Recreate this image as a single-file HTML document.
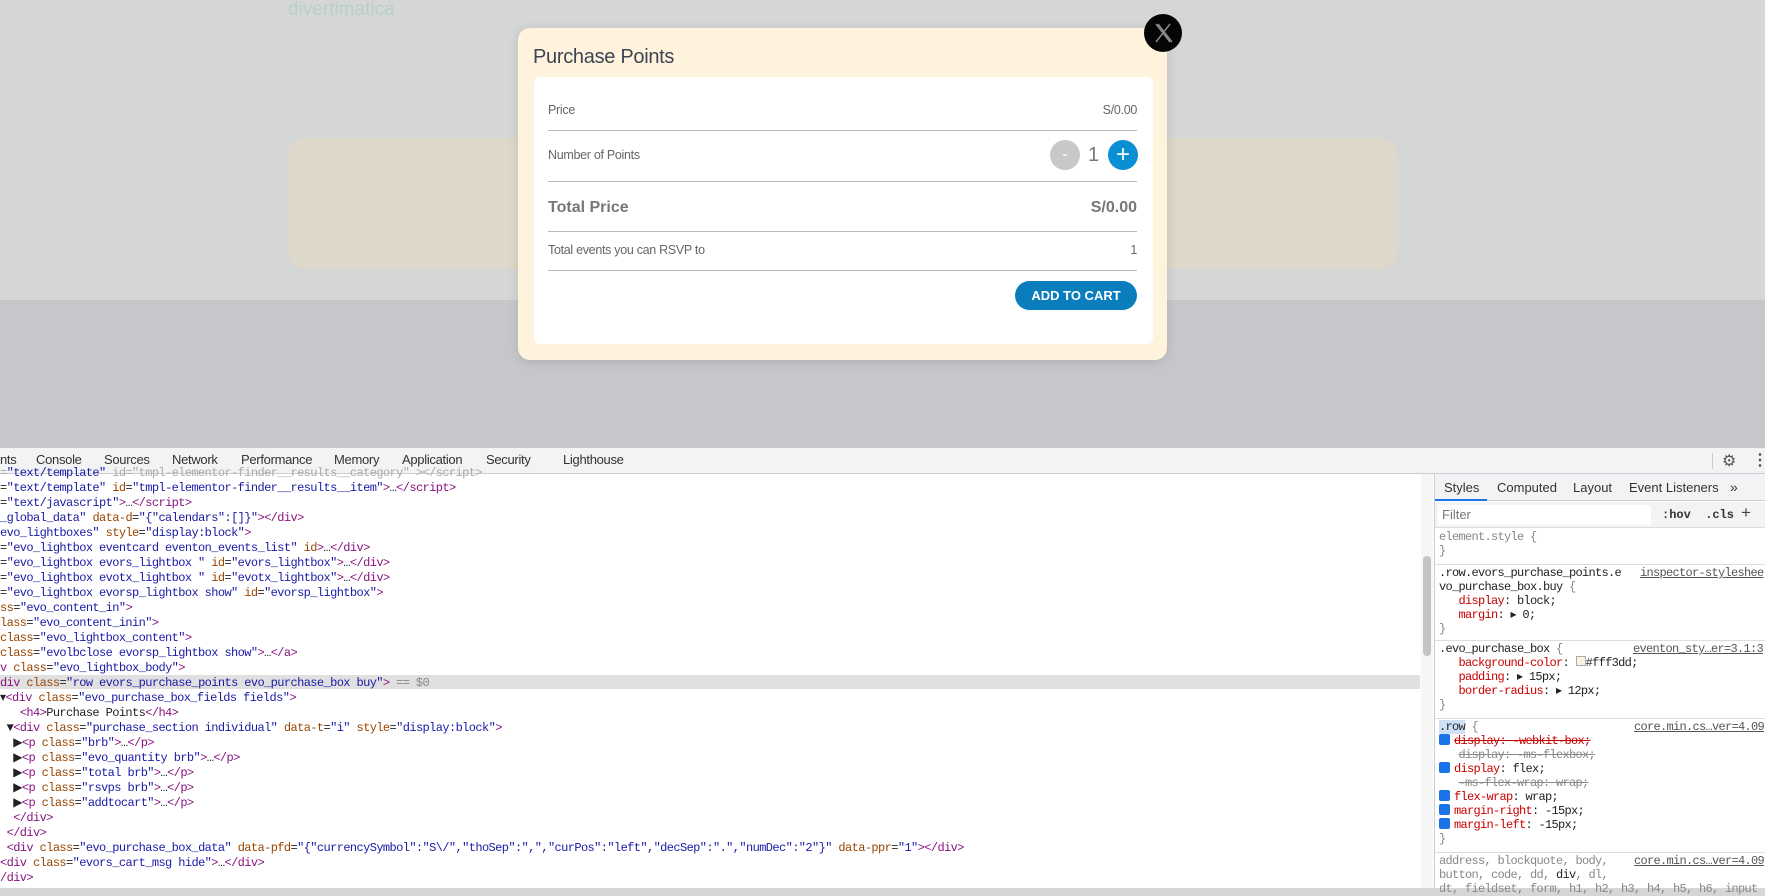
<!DOCTYPE html>
<html><head><meta charset="utf-8">
<style>
*{margin:0;padding:0;box-sizing:border-box}
body{width:1765px;height:888px;overflow:hidden;position:relative;background:#d5d6d6;font-family:"Liberation Sans",sans-serif}
.a{position:absolute;white-space:nowrap}
.modal{left:518px;top:28px;width:649px;height:332px;background:#fff3dd;border-radius:12px;box-shadow:0 2px 10px rgba(0,0,0,.12)}
.inner{left:534px;top:77px;width:619px;height:267px;background:#fff;border-radius:6px}
.lbl{font-size:12.5px;color:#666;letter-spacing:-.3px}
.hr{height:1px;background:#bbb;left:548px;width:589px}
.code{font-family:"Liberation Mono",monospace;font-size:12px;letter-spacing:-.6px;color:#222;line-height:15px;width:1420px;overflow:hidden}
.t{color:#881280}.n{color:#994500}.v{color:#1a1aa6}
.sty{font-family:"Liberation Mono",monospace;font-size:12px;letter-spacing:-.7px;color:#222}
.p{color:#c80000}.g{color:#888}
.tab{top:452px;font-size:13px;color:#333;letter-spacing:-.3px}
.cb{display:inline-block;width:11px;height:11px;background:#1a73e8;border-radius:2px;vertical-align:-1px;margin-right:4px}
</style></head><body>
<div class="a" style="left:0;top:300px;width:1765px;height:148px;background:#c6c7ca"></div>
<div class="a" style="left:288px;top:-1px;font-size:19px;color:#b9cfc7">divertimatica</div>
<div class="a" style="left:288px;top:138px;width:1110px;height:131px;background:#ddd8c9;border-radius:18px"></div>

<div class="a modal"></div>
<div class="a" style="left:533px;top:46px;font-size:20px;color:#3d4552;letter-spacing:-.3px">Purchase Points</div>
<div class="a inner"></div>
<div class="a lbl" style="left:548px;top:103px">Price</div>
<div class="a lbl" style="right:628px;top:103px">S/0.00</div>
<div class="a hr" style="top:130px"></div>
<div class="a lbl" style="left:548px;top:148px">Number of Points</div>
<div class="a" style="left:1050px;top:140px;width:30px;height:30px;border-radius:50%;background:#c8c8c8;color:#fff;font-size:16px;text-align:center;line-height:29px">-</div>
<div class="a" style="left:1088px;top:144px;font-size:20px;color:#777">1</div>
<div class="a" style="left:1108px;top:140px;width:30px;height:30px;border-radius:50%;background:#0a8fd4;color:#fff;font-size:24px;text-align:center;line-height:29px">+</div>
<div class="a hr" style="top:181px"></div>
<div class="a" style="left:548px;top:199px;font-size:16px;font-weight:bold;color:#777">Total Price</div>
<div class="a" style="right:628px;top:199px;font-size:16px;font-weight:bold;color:#777">S/0.00</div>
<div class="a hr" style="top:231px"></div>
<div class="a lbl" style="left:548px;top:243px">Total events you can RSVP to</div>
<div class="a lbl" style="right:628px;top:243px">1</div>
<div class="a hr" style="top:270px"></div>
<div class="a" style="left:1015px;top:281px;width:122px;height:29px;border-radius:15px;background:#0a7dbd;color:#fff;font-size:13px;font-weight:bold;text-align:center;line-height:29px">ADD TO CART</div>
<div class="a" style="left:1144px;top:14px;width:38px;height:38px;border-radius:50%;background:#050505"></div>
<svg class="a" style="left:1144px;top:14px" width="38" height="38"><path d="M12 10L26 28M26 10L12 28M14 10L28 28" stroke="#888" stroke-width="1.5"/></svg>

<!-- devtools -->
<div class="a" style="left:0;top:448px;width:1765px;height:440px;background:#fff"></div>
<div class="a" style="left:0;top:448px;width:1765px;height:26px;background:#f1f3f4;border-bottom:1px solid #cbcdd1"></div>
<div class="a tab" style="left:0">nts</div>
<div class="a tab" style="left:36px">Console</div>
<div class="a tab" style="left:104px">Sources</div>
<div class="a tab" style="left:172px">Network</div>
<div class="a tab" style="left:241px">Performance</div>
<div class="a tab" style="left:334px">Memory</div>
<div class="a tab" style="left:402px">Application</div>
<div class="a tab" style="left:486px">Security</div>
<div class="a tab" style="left:563px">Lighthouse</div>
<div class="a" style="left:1712px;top:453px;width:1px;height:16px;background:#ccc"></div>
<div class="a" style="left:1722px;top:451px;font-size:16px;color:#555">⚙</div>
<div class="a" style="left:1752px;top:450px;font-size:16px;color:#555;font-weight:bold">⋮</div>

<div class="a" style="left:0;top:675px;width:1420px;height:14px;background:#e0e0e0"></div>
<div class="a code" style="left:0;top:466px">
<div style="color:#aaa">=<span class="v">"text/template"</span> id="tmpl-elementor-finder__results__category" &gt;&lt;/script&gt;</div>
<div>=<span class="v">"text/template"</span> <span class="n">id</span>=<span class="v">"tmpl-elementor-finder__results__item"</span><span class="t">&gt;</span>…<span class="t">&lt;/script&gt;</span></div>
<div>=<span class="v">"text/javascript"</span><span class="t">&gt;</span>…<span class="t">&lt;/script&gt;</span></div>
<div><span class="v">_global_data"</span> <span class="n">data-d</span>=<span class="v">"{"calendars":[]}"</span><span class="t">&gt;&lt;/div&gt;</span></div>
<div><span class="v">evo_lightboxes"</span> <span class="n">style</span>=<span class="v">"display:block"</span><span class="t">&gt;</span></div>
<div>=<span class="v">"evo_lightbox eventcard eventon_events_list"</span> <span class="n">id</span><span class="t">&gt;</span>…<span class="t">&lt;/div&gt;</span></div>
<div>=<span class="v">"evo_lightbox evors_lightbox "</span> <span class="n">id</span>=<span class="v">"evors_lightbox"</span><span class="t">&gt;</span>…<span class="t">&lt;/div&gt;</span></div>
<div>=<span class="v">"evo_lightbox evotx_lightbox "</span> <span class="n">id</span>=<span class="v">"evotx_lightbox"</span><span class="t">&gt;</span>…<span class="t">&lt;/div&gt;</span></div>
<div>=<span class="v">"evo_lightbox evorsp_lightbox show"</span> <span class="n">id</span>=<span class="v">"evorsp_lightbox"</span><span class="t">&gt;</span></div>
<div><span class="n">ss</span>=<span class="v">"evo_content_in"</span><span class="t">&gt;</span></div>
<div><span class="n">lass</span>=<span class="v">"evo_content_inin"</span><span class="t">&gt;</span></div>
<div> <span class="n">class</span>=<span class="v">"evo_lightbox_content"</span><span class="t">&gt;</span></div>
<div> <span class="n">class</span>=<span class="v">"evolbclose evorsp_lightbox show"</span><span class="t">&gt;</span>…<span class="t">&lt;/a&gt;</span></div>
<div><span class="t">v</span> <span class="n">class</span>=<span class="v">"evo_lightbox_body"</span><span class="t">&gt;</span></div>
<div><span class="t">div</span> <span class="n">class</span>=<span class="v">"row evors_purchase_points evo_purchase_box buy"</span><span class="t">&gt;</span> <span class="g">== $0</span></div>
<div>▾<span class="t">&lt;div</span> <span class="n">class</span>=<span class="v">"evo_purchase_box_fields fields"</span><span class="t">&gt;</span></div>
<div>&nbsp;&nbsp;&nbsp;<span class="t">&lt;h4&gt;</span>Purchase Points<span class="t">&lt;/h4&gt;</span></div>
<div>&nbsp;▼<span class="t">&lt;div</span> <span class="n">class</span>=<span class="v">"purchase_section individual"</span> <span class="n">data-t</span>=<span class="v">"i"</span> <span class="n">style</span>=<span class="v">"display:block"</span><span class="t">&gt;</span></div>
<div>&nbsp;&nbsp;▶<span class="t">&lt;p</span> <span class="n">class</span>=<span class="v">"brb"</span><span class="t">&gt;</span>…<span class="t">&lt;/p&gt;</span></div>
<div>&nbsp;&nbsp;▶<span class="t">&lt;p</span> <span class="n">class</span>=<span class="v">"evo_quantity brb"</span><span class="t">&gt;</span>…<span class="t">&lt;/p&gt;</span></div>
<div>&nbsp;&nbsp;▶<span class="t">&lt;p</span> <span class="n">class</span>=<span class="v">"total brb"</span><span class="t">&gt;</span>…<span class="t">&lt;/p&gt;</span></div>
<div>&nbsp;&nbsp;▶<span class="t">&lt;p</span> <span class="n">class</span>=<span class="v">"rsvps brb"</span><span class="t">&gt;</span>…<span class="t">&lt;/p&gt;</span></div>
<div>&nbsp;&nbsp;▶<span class="t">&lt;p</span> <span class="n">class</span>=<span class="v">"addtocart"</span><span class="t">&gt;</span>…<span class="t">&lt;/p&gt;</span></div>
<div>&nbsp;&nbsp;<span class="t">&lt;/div&gt;</span></div>
<div>&nbsp;<span class="t">&lt;/div&gt;</span></div>
<div>&nbsp;<span class="t">&lt;div</span> <span class="n">class</span>=<span class="v">"evo_purchase_box_data"</span> <span class="n">data-pfd</span>=<span class="v">"{"currencySymbol":"S\/","thoSep":",","curPos":"left","decSep":".","numDec":"2"}"</span> <span class="n">data-ppr</span>=<span class="v">"1"</span><span class="t">&gt;&lt;/div&gt;</span></div>
<div><span class="t">&lt;div</span> <span class="n">class</span>=<span class="v">"evors_cart_msg hide"</span><span class="t">&gt;</span>…<span class="t">&lt;/div&gt;</span></div>
<div><span class="t">/div&gt;</span></div>
</div>

<div class="a" style="left:1421px;top:474px;width:12px;height:414px;background:#f6f6f6"></div>
<div class="a" style="left:1423px;top:556px;width:8px;height:100px;background:#c4c4c4;border-radius:4px"></div>
<div class="a" style="left:1434px;top:474px;width:1px;height:414px;background:#cbcdd1"></div>
<div class="a" style="left:1435px;top:474px;width:330px;height:27px;background:#f1f3f4;border-bottom:1px solid #cbcdd1"></div>
<div class="a" style="left:1435px;top:499px;width:52px;height:2px;background:#1a73e8"></div>
<div class="a" style="left:1444px;top:480px;font-size:13px;color:#333">Styles</div>
<div class="a" style="left:1497px;top:480px;font-size:13px;color:#333">Computed</div>
<div class="a" style="left:1573px;top:480px;font-size:13px;color:#333">Layout</div>
<div class="a" style="left:1629px;top:480px;font-size:13px;color:#333">Event Listeners</div>
<div class="a" style="left:1730px;top:479px;font-size:14px;color:#333">»</div>
<div class="a" style="left:1435px;top:502px;width:330px;height:26px;background:#f1f3f4;border-bottom:1px solid #ddd"></div>
<div class="a" style="left:1438px;top:505px;width:213px;height:20px;background:#fff"></div>
<div class="a" style="left:1442px;top:507px;font-size:13px;color:#777">Filter</div>
<div class="a" style="left:1662px;top:508px;font-family:'Liberation Mono',monospace;font-size:12px;font-weight:bold;color:#333">:hov&nbsp;&nbsp;.cls</div>
<div class="a" style="left:1741px;top:503px;font-size:17px;color:#444">+</div>
<div class="a sty" style="left:1439px;top:530px;line-height:14px">
<div class="g">element.style {</div><div class="g">}</div>
</div>
<div class="a" style="left:1435px;top:564px;width:330px;height:1px;background:#ddd"></div>
<div class="a sty" style="left:1439px;top:566px;line-height:14px">
<div>.row.evors_purchase_points.e</div><div>vo_purchase_box.buy <span class="g">{</span></div>
<div>&nbsp;&nbsp;&nbsp;<span class="p">display</span>: block;</div>
<div>&nbsp;&nbsp;&nbsp;<span class="p">margin</span>: ▸ 0;</div>
<div class="g">}</div>
</div>
<div class="a sty" style="left:1640px;top:566px;color:#555;text-decoration:underline">inspector-styleshee</div>
<div class="a" style="left:1435px;top:640px;width:330px;height:1px;background:#ddd"></div>
<div class="a sty" style="left:1439px;top:642px;line-height:14px">
<div>.evo_purchase_box <span class="g">{</span></div>
<div>&nbsp;&nbsp;&nbsp;<span class="p">background-color</span>: <span style="display:inline-block;width:10px;height:10px;background:#fff3dd;border:1px solid #aaa"></span>#fff3dd;</div>
<div>&nbsp;&nbsp;&nbsp;<span class="p">padding</span>: ▸ 15px;</div>
<div>&nbsp;&nbsp;&nbsp;<span class="p">border-radius</span>: ▸ 12px;</div>
<div class="g">}</div>
</div>
<div class="a sty" style="left:1633px;top:642px;color:#555;text-decoration:underline">eventon_sty…er=3.1:3</div>
<div class="a" style="left:1435px;top:718px;width:330px;height:1px;background:#ddd"></div>
<div class="a sty" style="left:1439px;top:720px;line-height:14px">
<div><span style="background:#cfe1f6">.row</span> <span class="g">{</span></div>
<div><span class="cb"></span><span class="p" style="text-decoration:line-through">display: -webkit-box;</span></div>
<div>&nbsp;&nbsp;&nbsp;<span class="g" style="text-decoration:line-through">display: -ms-flexbox;</span></div>
<div><span class="cb"></span><span class="p">display</span>: flex;</div>
<div>&nbsp;&nbsp;&nbsp;<span class="g" style="text-decoration:line-through">-ms-flex-wrap: wrap;</span></div>
<div><span class="cb"></span><span class="p">flex-wrap</span>: wrap;</div>
<div><span class="cb"></span><span class="p">margin-right</span>: -15px;</div>
<div><span class="cb"></span><span class="p">margin-left</span>: -15px;</div>
<div class="g">}</div>
</div>
<div class="a sty" style="left:1634px;top:720px;color:#555;text-decoration:underline">core.min.cs…ver=4.09</div>
<div class="a" style="left:1435px;top:852px;width:330px;height:1px;background:#ddd"></div>
<div class="a sty" style="left:1439px;top:854px;line-height:14px;color:#888">
<div>address, blockquote, body,</div><div>button, code, dd, <span style="color:#222">div</span>, dl,</div><div>dt, fieldset, form, h1, h2, h3, h4, h5, h6, input</div>
</div>
<div class="a sty" style="left:1634px;top:854px;color:#555;text-decoration:underline;background:#fff">core.min.cs…ver=4.09</div>
</body></html>
